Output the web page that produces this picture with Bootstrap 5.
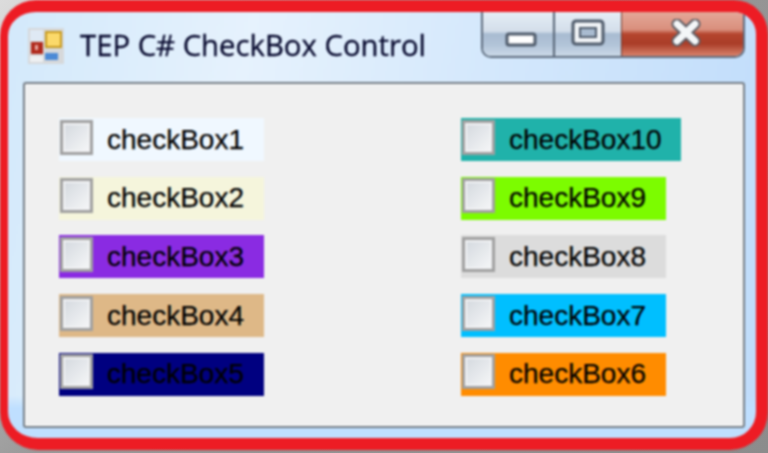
<!DOCTYPE html>
<html lang="en">
<head>
<meta charset="utf-8">
<title>TEP C# CheckBox Control</title>
<link href="https://cdn.jsdelivr.net/npm/bootstrap@5.3.0/dist/css/bootstrap.min.css" rel="stylesheet">
<style>
html,body{height:100%;}
body{background:linear-gradient(135deg,#dcdcdc,#9a9a9a 40%,#8c8c8c);overflow:hidden;}
.win-frame{width:768px;height:450px;border-style:solid;border-color:#ed1c24;border-width:12px 12px 12px 8px;border-radius:36px 34px 38px 38px;background:linear-gradient(to bottom,rgba(191,223,255,0) 0,rgba(191,223,255,0) 90%,#bfdfff 93%),linear-gradient(100deg,#d3e9fb 0%,#e6f2fd 30%,#d4e8fc 60%,#bfdcfb 100%);filter:blur(.8px);overflow:hidden;}
.win-title{height:70px;flex:none;}
.app-icon{width:36px;height:36px;margin:16px 0 0 20px;flex:none;}
.win-caption{font-family:"Open Sans",sans-serif;font-size:29.3px;color:#05072c;-webkit-text-stroke:.3px #05072c;margin:13px 0 0 16px;line-height:40px;white-space:nowrap;}
.cap-group{margin-right:11px;height:46px;border:2px solid #5d6b7d;border-top:0;border-radius:0 0 10px 10px;overflow:hidden;flex:none;}
.cap-btn{height:100%;display:flex;align-items:flex-start;justify-content:center;background:linear-gradient(#e6eef6 0,#d3deea 44%,#a8bbd1 50%,#b2c4d8 75%,#cbd9e8 100%);}
.cap-min{width:72px;padding-left:5px;border-right:2px solid #566475;}
.cap-max{width:66px;}
.cap-close{width:122px;padding-left:6px;background:linear-gradient(#e4a898 0,#d98f7d 40%,#b5452e 50%,#aa3d28 72%,#d8826c 100%);border-left:1px solid #6e3a30;}
.glyph-min{margin-top:20px}
.glyph-top{margin-top:7px}
.win-panel{flex:1 1 auto;margin:0 11px 10px 15px;background:#f0f0f0;border:2px solid #727a82;border-radius:3px;box-shadow:inset 0 0 0 1px #fff;padding:34px 0 0 34px;}
.cb-col{width:402px;flex:none;gap:15.7px;}
.cb-item{height:43px;width:205px;padding:0 0 0 1px;font-family:"Liberation Sans",Arial,sans-serif;font-size:28px;color:#000;-webkit-text-stroke:.25px #000;margin:0;line-height:1;}
.cb-wide{width:220px;}
.cb-item .cb-box{width:33px;height:35px;margin:-5px 14px 0 0;float:none;flex:none;border:3px solid #a0a0a0;border-radius:0;background-image:none;background:linear-gradient(135deg,#d3d8de,#f6f7f8);box-shadow:inset 0 0 0 2px #f1f2f4;}
.c-alice{background:#f0f8ff}.c-beige{background:#f5f5dc}.c-violet{background:#8a2be2}.c-wood{background:#deb887}.c-navy{background:#000080}
.c-teal{background:#20b2aa}.c-lawn{background:#7cfc00}.c-gainsboro{background:#dcdcdc}.c-sky{background:#00bfff}.c-orange{background:#ff8c00}
</style>
</head>
<body>
<div class="win-frame d-flex flex-column">
  <div class="win-title d-flex align-items-start">
    <svg class="app-icon" viewBox="0 0 36 36" aria-hidden="true">
      <rect x="0" y="0" width="36" height="36" fill="#d6d8da"/>
      <rect x="2" y="2" width="13" height="11" fill="#dfe9f4"/>
      <rect x="3" y="14" width="12" height="12" fill="#b02a1c"/>
      <rect x="7" y="17" width="3" height="5" fill="#e8a8a0"/>
      <rect x="17" y="3" width="17" height="17" fill="#c79a1e"/>
      <rect x="19" y="5" width="13" height="13" fill="#fbd96a"/>
      <rect x="17" y="25" width="13" height="7" fill="#4c8ad6"/>
      <rect x="2" y="28" width="13" height="6" fill="#eef0f2"/>
    </svg>
    <div class="win-caption">TEP C# CheckBox Control</div>
    <div class="cap-group d-flex ms-auto">
      <div class="cap-btn cap-min"><svg width="32" height="16" viewBox="0 0 32 16" class="glyph-min" aria-hidden="true"><rect x="2" y="2" width="28" height="11" rx="2" fill="#fff" stroke="#4e5a6a" stroke-width="3"/></svg></div>
      <div class="cap-btn cap-max"><svg width="34" height="28" viewBox="0 0 34 28" class="glyph-top" aria-hidden="true"><rect x="2" y="2" width="30" height="23" rx="3" fill="#f2f5f8" stroke="#4e5a6a" stroke-width="3"/><rect x="9" y="9" width="16" height="9" fill="#a9bbd0" stroke="#4e5a6a" stroke-width="2"/></svg></div>
      <div class="cap-btn cap-close"><svg width="32" height="28" viewBox="0 0 32 28" class="glyph-top" aria-hidden="true"><path d="M7 5 25 22M25 5 7 22" stroke="#5a5a62" stroke-width="11" stroke-linecap="round"/><path d="M7 5 25 22M25 5 7 22" stroke="#f4f6f8" stroke-width="7" stroke-linecap="round"/></svg></div>
    </div>
  </div>
  <div class="win-panel d-flex">
    <div class="cb-col d-flex flex-column align-items-start">
      <label class="cb-item d-flex align-items-center c-alice"><input class="form-check-input cb-box" type="checkbox">checkBox1</label>
      <label class="cb-item d-flex align-items-center c-beige"><input class="form-check-input cb-box" type="checkbox">checkBox2</label>
      <label class="cb-item d-flex align-items-center c-violet"><input class="form-check-input cb-box" type="checkbox">checkBox3</label>
      <label class="cb-item d-flex align-items-center c-wood"><input class="form-check-input cb-box" type="checkbox">checkBox4</label>
      <label class="cb-item d-flex align-items-center c-navy"><input class="form-check-input cb-box" type="checkbox">checkBox5</label>
    </div>
    <div class="cb-col d-flex flex-column align-items-start">
      <label class="cb-item cb-wide d-flex align-items-center c-teal"><input class="form-check-input cb-box" type="checkbox">checkBox10</label>
      <label class="cb-item d-flex align-items-center c-lawn"><input class="form-check-input cb-box" type="checkbox">checkBox9</label>
      <label class="cb-item d-flex align-items-center c-gainsboro"><input class="form-check-input cb-box" type="checkbox">checkBox8</label>
      <label class="cb-item d-flex align-items-center c-sky"><input class="form-check-input cb-box" type="checkbox">checkBox7</label>
      <label class="cb-item d-flex align-items-center c-orange"><input class="form-check-input cb-box" type="checkbox">checkBox6</label>
    </div>
  </div>
</div>
<script src="https://cdn.jsdelivr.net/npm/bootstrap@5.3.0/dist/js/bootstrap.bundle.min.js"></script>
</body>
</html>
